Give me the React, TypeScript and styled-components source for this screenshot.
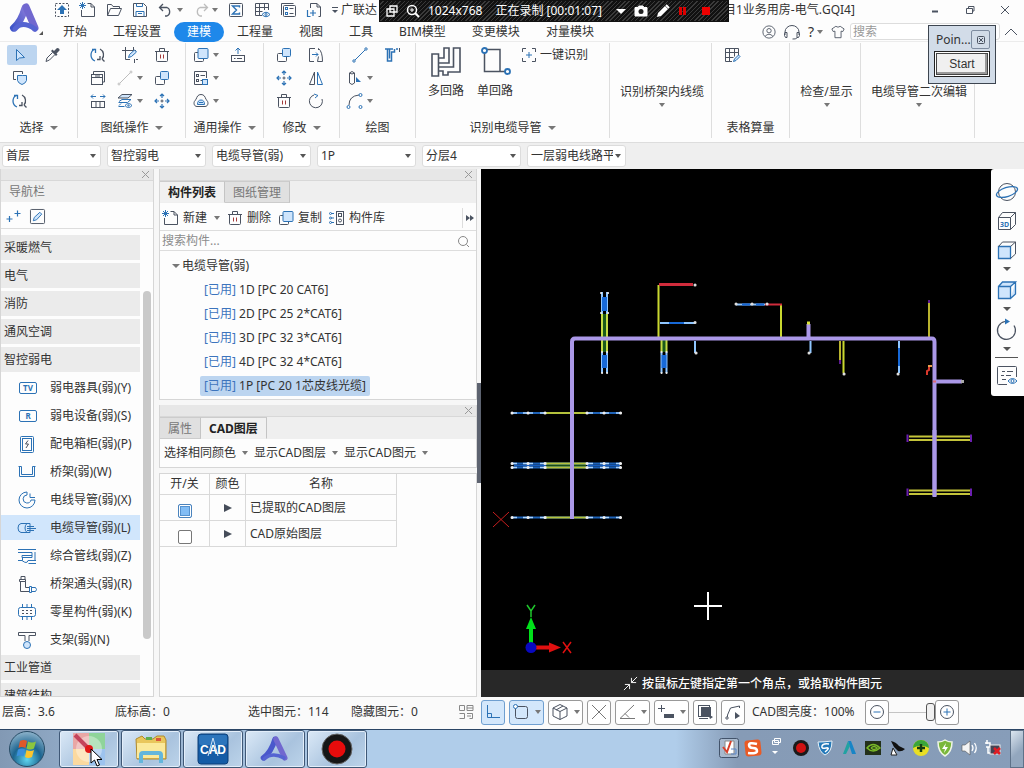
import React from "react";
import styled, { createGlobalStyle, css } from "styled-components";

const DARK = "#4b5361";
const BLUE = "#2c72b5";

const GlobalStyle = createGlobalStyle`
  * { box-sizing: border-box; }
  body {
    margin: 0;
    overflow: hidden;
    font-family: "Noto Sans", "Noto Sans CJK SC", sans-serif;
    font-size: 12px;
    line-height: 16px;
    color: #333;
    background: #fdfdfd;
  }
  button, input, select { font: inherit; color: inherit; }
  button { padding: 0; border: 0; background: none; cursor: default; }
  ul { list-style: none; margin: 0; padding: 0; }
  a { color: inherit; text-decoration: none; }
`;

/* ---------- icons ---------- */

const Glyph = styled.svg<{ $s?: number; $c?: string }>`
  display: block;
  flex: none;
  width: ${(p) => p.$s ?? 16}px;
  height: ${(p) => p.$s ?? 16}px;
  fill: none;
  stroke: ${(p) => p.$c ?? DARK};
  overflow: visible;
  .b { stroke: ${BLUE}; }
  .f { fill: #cfe5fc; }
  .w { fill: #fff; }
  .r { stroke: #a33a3a; }
  .g { stroke: #bdbdbd; }
  .sb { fill: ${BLUE}; stroke: none; }
  .sd { fill: ${DARK}; stroke: none; }
`;

const art: Record<string, React.ReactNode> = {
  upload: (<><rect x="1.5" y="1.5" width="13" height="13" strokeDasharray="2 1.5" /><path className="sb" d="M8 3l5 5h-3v4H6V8H3z" /></>),
  newFile: (<><path d="M7.500 1.500H11l3.500 3.500v9.500h-13V8M11 1.500V5h3.500" /><path className="b" d="M0 1l5 5M5 1L0 6M2.500 0v7M-1 3.500h7" /></>),
  folder: (<path d="M1.500 13.500v-11h4l1.500 2h6.500v2M1.500 13.500l3-7h11l-3 7z" />),
  save: (<><path d="M1.500 14.500v-13h10l3 3v10z" /><path className="b" d="M4.500 1.500v3h6v-3M4 14.500v-5h8v5M6 11.500h4" /></>),
  undo: (<path strokeWidth="1.300" d="M5 2L1.500 5.500 5 9M2 5.500h7a4 4.500 0 010 8.500H7" />),
  redo: (<path className="g" strokeWidth="1.300" d="M11 2l3.500 3.500L11 9M14 5.500H7a4 4.500 0 000 8.500h2" />),
  sigma: (<><rect x="1.500" y="1.500" width="13" height="13" rx="1" /><path className="b" strokeWidth="1.400" d="M11.500 5.500V4h-7l4 4-4 4h7v-1.500" /></>),
  gridEye: (<><path d="M8 13.500H1.500v-12h13V8M1.500 5.500h13M1.500 9.500h7M5.500 1.500v12M10.500 1.500V8" /><path className="b" d="M8 12.500q4-4.500 8 0q-4 4.500-8 0z" /><circle className="b" cx="12" cy="12.500" r="1" /></>),
  listDoc: (<><path d="M1.500 13V1.500h12" /><rect x="3.500" y="3.500" width="12" height="11" rx="1" /><rect className="b" x="5.500" y="5.500" width="2" height="2" /><rect className="b" x="5.500" y="10.500" width="2" height="2" /><path d="M9.500 6.500h4M9.500 11.500h4" /></>),
  docAdd: (<><path d="M4.500 6V1.500H11l3.500 3.500v9.500h-2M11 1.500V5h3.500" /><path className="b" d="M7 8v6M4 11h6M1.500 8v6.500h3" strokeWidth="1.200" /></>),
  cursor: (<path className="b f" d="M4.500 2.500v11l3-2.500 5-.5z" />),
  dropper: (<><path className="sd" d="M10 4l3-3q3 0 2.500 2.500l-3 3 1 1-1.500 1.500-5-5L8.500 2.500z" /><path d="M8.500 5.500L3 11l-1 3.500L5.500 13 11 7.500" /></>),
  shapes: (<><path d="M4 9.500H1.500v-8h9V4" /><path className="b f" d="M5.500 5.500q5 0 9 0v5q-1 3-4.500 4-3.500-1-4.500-4z" /></>),
  refreshSearch: (<><path className="b" strokeWidth="1.300" d="M5 14A6.500 6.500 0 015 2M2 2.500h3.500V6" /><path strokeWidth="1.300" d="M10 2a6.500 6.500 0 012 10M14.500 14.500L12 12M10 9v3.500h-3" /></>),
  cropPen: (<><path d="M3.500 0v12.500H8M0 3.500h14M11.500 0v4M14 12.500h2M12.500 12v4" /><path className="b f" d="M6.500 10.500l1-3 5-4.500 2 2-5 4.500z" /></>),
  trash: (<><path d="M1 4.500h14M5.500 4V1.500h5V4M2.500 4.500v9q0 1 1 1h9q1 0 1-1v-9" /><path className="r" d="M6.500 7.500v4M9.500 7.500v4" /></>),
  layersWin: (<><rect x="1.500" y="4.500" width="11" height="10" /><path d="M1.500 7.500h11M3.500 4V1.500h11v10.500H13M5 6h5" /></>),
  lineGray: (<><path className="g" d="M3 13L13 3" /><circle className="g" cx="2" cy="14" r="1" /><circle className="g" cx="14" cy="2" r="1" /></>),
  copy: (<><rect x="1.500" y="6.500" width="9" height="8" rx="1" /><rect className="b f" x="6.500" y="1.500" width="8" height="8" rx="1" /></>),
  copyBig: (<><rect x="1.500" y="5.500" width="9" height="9" rx="1" /><rect className="b f" x="5" y="1.500" width="10" height="10" rx="1" /></>),
  split: (<><path className="b" d="M6 3.500H1M3 1.500l-2 2 2 2M10 3.500h5M13 1.500l2 2-2 2" /><rect x="1.500" y="8.500" width="13" height="6" /><path d="M6 8.500v6M10 8.500v6" /></>),
  stack: (<><path className="f" d="M5 1.500h10l-4 3.500H1z" /><path className="b" d="M2 8.500l3-2h9l-3.500 3H1.500M2 12.500l2-2M1.500 13.500h6" /><path className="b" d="M8 12.500q3.500-4 7 0-3.500 4-7 0z" /><circle className="b" cx="11.500" cy="12.500" r=".7" /></>),
  move: (<><path className="b" d="M8 1v4M6 3l2-2 2 2M8 15v-4M6 13l2 2 2-2M1 8h4M3 6L1 8l2 2M15 8h-4M13 6l2 2-2 2" strokeWidth="1.200" /><path d="M6.500 8h3M8 6.500v3" /></>),
  pushUp: (<><path className="b" d="M8 7V1M5.500 3.500L8 1l2.500 2.500" /><rect x="1.500" y="8.500" width="13" height="6" /><path d="M4 11.500h1.500M7 11.500h5" /></>),
  form: (<><path d="M9 14.500H1.500v-13h12V8" /><rect x="3.500" y="4.500" width="2" height="2" /><rect x="3.500" y="9.500" width="2" height="2" /><path d="M7.500 5.500H12M7.500 10.500H9" /><rect className="b f" x="9.500" y="9.500" width="5" height="5" /></>),
  cloud: (<><path d="M8 1.500c3 0 4 2 5 5 3 2 2.500 7-1 7H4c-3.500 0-4-5-1-7 1-3 2-5 5-5z" /><path className="b f" d="M4.500 11.500q0-4.500 3.500-4.500t3.500 4.500zM6 9.500h4" /></>),
  extend: (<><path d="M6 14.500H1.500v-13H7M10.500 3V1.500q4 3 4 13H9.500l1-5" /><path className="b" d="M4 7.500h6M8 5.500l2 2-2 2" /></>),
  mirror: (<><path d="M6.500 2v12.500H1.500z" /><path className="b" d="M9.500 2v12.500h5z" /></>),
  rotate: (<><path d="M6 2A6.500 6.500 0 1014 6" /><path className="b" d="M6 1l4 1.500L7 5" /></>),
  line: (<><path className="b" d="M3 13L13 3" /><circle className="b" cx="2" cy="14" r="1.200" /><circle className="b" cx="14" cy="2" r="1.200" /></>),
  pipe: (<><path className="b" strokeWidth="1.500" d="M3.500 2v12h4V5h3V2" /><path className="b" strokeWidth="1.500" d="M5.500 2v9.500M9 2H1M12 2h2" /><path d="M15.500 1v4" /></>),
  cylinder: (<><path d="M2.500 3v10q2.500 3 5 0V3q-2.500-3-5 0q2.500 2 5 0" /><path className="sb" d="M9 7l5 5H9z" /></>),
  arc: (<><path d="M2 12Q2 3 12 2" /><circle className="b" cx="1.500" cy="14" r="1.500" /><circle className="b" cx="13.500" cy="2" r="1.500" /><circle className="b" cx="13.500" cy="14" r="1.500" /></>),
  multi: (<g strokeWidth="1.600"><path d="M1 7h6.500v22H1z" /><path d="M8 11h5V1h5v15H8" /><path d="M8 20h14.500V1H29v24H17v3h-5v-4H8" /></g>),
  single: (<><path strokeWidth="1.500" d="M4.500 6v18.500H20V2.500H7M20 24.500h5" /><circle className="b w" cx="4.500" cy="3.500" r="2.500" strokeWidth="1.800" /><circle className="b w" cx="27.500" cy="24.500" r="2.500" strokeWidth="1.800" /></>),
  scan: (<><path d="M1.500 5V1.500H5M11 1.500h3.500V5M14.500 11v3.500H11M5 14.500H1.500V11" /><path className="b" d="M8 5v6M5 8h6" /></>),
  tableEdit: (<><path d="M8 14.500H1.500v-13h13V8M1.500 5.500h13M1.500 10.500h8M5.500 1.500v13M10.500 1.500v8" /><path className="b f" d="M9.500 14.500l1-2.500 4-4 1.500 1.500-4 4z" /></>),
  user: (<><circle cx="8" cy="8" r="7" /><circle cx="8" cy="6.500" r="2.500" /><path d="M3.500 13q4.500-5 9 0" /></>),
  headset: (<path d="M1 11V8a7 6.500 0 0114 0v3M1 8.500h2v5H1.500l-1-2v-2zM15 8.500h-2v5h1.500l1-2v-2zM13.500 13.500q-2 2-5 1.500" />),
  shirt: (<path d="M5.500 1.500q2.500 2 5 0L15 4.500l-1.500 3-2-.5v7.500h-7V7l-2 .5-1.500-3z" />),
  search: (<><circle cx="7" cy="7" r="4.500" /><path d="M10.500 10.500L13 13" /></>),
  plusPlus: (<path className="b" strokeWidth="1.200" d="M3.500 8v6M.5 11h6M11.500 2.500v6M8.500 5.500h6" />),
  editBox: (<><rect x=".5" y=".5" width="15" height="15" rx="1" /><path className="b f" d="M3.500 12.500l1-3.500 6-5.500 2 2-5.500 6z" /></>),
  library: (<><path className="b" d="M5 3.500H2M5 8H2M5 12.500H2" /><circle className="b" cx="1.500" cy="3.500" r="1" /><circle className="b" cx="1.500" cy="8" r="1" /><circle className="b" cx="1.500" cy="12.500" r="1" /><rect x="7.500" y="1.500" width="7" height="13" /><rect x="9.500" y="3.500" width="3" height="3" /><circle cx="11" cy="10.500" r="1.500" /></>),
  cabinet: (<><rect className="b" x="1.500" y=".5" width="13" height="16" rx="1" /><rect className="b" x="3.500" y="2.500" width="9" height="12" /><path d="M9 4.500L6.500 8h3L7 12" /></>),
  tray: (<path className="b" d="M-.5 2.500h3v8h11v-8h3M.5 2.500v10h15v-10" />),
  conduit: (<path className="b" d="M8 3V0A8 8 0 1016 8h-4a4 4 0 11-4-5M11 1.500v4h5" />),
  cable: (<><path className="b" d="M5 3.500H2Q-1 4-1 8t3 4.500h6Q6 11 6 8t2-4.500zM8 3.500h3v9H8M8 6.500h7M8 8.500h9M8 10.500h7" /></>),
  pipes: (<path className="b" d="M-1 1.500h18M-1 4.500h14v5H3v-2h10M16 4v8M-1 12.500h4q5 4 6 0h8M3.500 10v2.500M9.500 15.500H17" />),
  joint: (<><path d="M1.500 5.500h5v6h4v4h-9zM.5 3.500h6v2h-6z" /><path d="M2 3.500v-3h4v3" /><path className="b" d="M10.500 10.500h2v6h-2zM12.500 11.500h4q2 2 0 4h-4" /></>),
  chip: (<><rect className="b" x="-.5" y="3.500" width="17" height="9" rx="2" /><path className="b" d="M3.500 0v3M8 0v3M12.500 0v3M3.500 13v3M8 13v3M12.500 13v3" /><path d="M3 6.500h2M7 6.500h2M11 6.500h2M3 9.500h2M7 9.500h2M11 9.500h2" /></>),
  bracket: (<><path d="M-.5.500h17v3H10V9M-.5.500v3H6V9" /><circle className="b f" cx="8" cy="13" r="3.500" /></>),
  angle: (<><path className="b" d="M2.500 1v12.500H15M2.500 9.500h4v4" /></>),
  boxNode: (<><rect x="2.500" y="2.500" width="12" height="12" rx="2" /><circle className="b w" cx="2.500" cy="2.500" r="2" /></>),
  cube: (<path d="M8 .5l7 3.500v8l-7 3.500L1 12V4zM1 4l7 3.500L15 4M8 7.500v8M4 6l7-4" />),
  crossX: (<path d="M1 1l14 14M15 1L1 15" stroke="#777" />),
  slope: (<path d="M1 14.500h15M1 14.500L15 1M6 9.500l4 4" stroke="#777" />),
  plusBar: (<><path d="M3.500 1v7M0 4.500h7" /><path className="sd" d="M6 10h10v4H6z" /></>),
  darkBox: (<><rect x="1.500" y="1.500" width="11" height="11" /><path className="sd" d="M4 3h10v10H4zM11 10l5 3-3 2z" /><path d="M2 14.500h9" /></>),
  polyCur: (<><path d="M2.500 14v-3l3-7 9-2v2" /><circle className="w" cx="2" cy="14" r="1.200" /><path className="sd" d="M10 8l5 4-5 3z" /></>),
  layoutGray: (<path d="M1.500 1.500h5v5h-5zM9 1.500h6v5H9zM1.500 9.500h5v5h-5M9 9.500h5.500v5h-3M9 12h4M9 4h6" stroke="#888" />),
  minus: (<><circle cx="8" cy="8" r="6.500" /><path className="b" d="M4.500 8h7" /></>),
  plus: (<><circle cx="8" cy="8" r="6.500" /><path className="b" d="M4.500 8h7M8 4.500v7" /></>),
  shrink: (<path stroke="#fff" d="M15 1L9 7M9 2v5h5M1 15l6-6M2 9h5v5" />),
  orbit: (<><circle cx="10" cy="10" r="8.500" /><ellipse className="b" cx="10" cy="10" rx="11" ry="4.500" transform="rotate(-18 10 10)" strokeWidth="1.300" /></>),
  cube3d: (<><path d="M1.500 6.500h12v12h-12zM1.500 6.500l4-5h13l-5 5M18.500 1.500v12l-5 5" /><text x="3" y="16" fill={BLUE} stroke="none" fontSize="7" fontWeight="bold">3D</text></>),
  cubeFront: (<><path className="b f" d="M1.500 6.500h12v12h-12z" strokeWidth="1.300" /><path d="M1.500 6.500l4-4.500h13l-5 4.500M18.500 2v12l-5 4.500" /></>),
  cubeBlue: (<path className="b f" strokeWidth="1.300" d="M1.500 6.500h12v12h-12zM1.500 6.500l4-4.500h13l-5 4.500M18.500 2v12l-5 4.500" />),
  spin: (<><path d="M8 1.500a9 9 0 109 4" strokeWidth="1.200" /><path className="sb" d="M8-1.500l5 3-5 3z" /></>),
  noteEye: (<><path d="M10 19.500H1.500q-1 0-1-1v-16q0-1 1-1h17q1 0 1 1V12" /><path d="M5 6.500h3M10 6.500h6M4 10.500h3M9 10.500h5M5 14.500h4" /><path className="b" d="M11 16q4.500-5 9 0-4.500 5-9 0z" /><circle className="b" cx="15.500" cy="16" r="1.500" /></>),
};

const Icon = ({ n, s = 16, v = s }: { n: string; s?: number; v?: number }) => (
  <Glyph $s={s} viewBox={`0 0 ${v} ${v}`} aria-hidden="true">{art[n]}</Glyph>
);

const CaretSvg = styled.svg<{ $big?: boolean }>`
  display: block;
  flex: none;
  width: ${(p) => (p.$big ? 8 : 6)}px;
  height: 4px;
  fill: #777;
`;
const Caret = ({ big }: { big?: boolean }) => (
  <CaretSvg $big={big} viewBox="0 0 8 4" preserveAspectRatio="none" aria-hidden="true"><path d="M0 0h8L4 4z" /></CaretSvg>
);
const Cross = () => (
  <Glyph $s={7} $c="#999" viewBox="0 0 7 7"><path d="M0 0l7 7M7 0L0 7" /></Glyph>
);

/* ---------- header ---------- */

const Page = styled.div`
  display: flex;
  flex-direction: column;
  height: 100vh;
  overflow: hidden;
`;
const Header = styled.header`
  position: relative;
  display: grid;
  grid-template-columns: 50px minmax(0, 1fr);
  grid-template-rows: 20px 21px;
  border-bottom: 1px solid #ececec;
`;
const Logo = styled.div`
  grid-row: span 2;
  padding: 2px 0 0 8px;
`;
const TitleRow = styled.div`
  display: flex;
  align-items: center;
  white-space: nowrap;
`;
const TitleStart = styled.span`
  width: 38px;
  overflow: hidden;
`;
const QuickBar = styled.div`
  display: flex;
  align-items: center;
  width: 291px;
  gap: 10px;
  padding-left: 4px;
`;
const QuickButton = styled.button`
  display: flex;
  align-items: center;
  gap: 3px;
  height: 18px;
`;
const Recorder = styled.div`
  position: relative;
  z-index: 2;
  align-self: flex-start;
  display: flex;
  align-items: center;
  flex: none;
  gap: 8px;
  width: 350px;
  height: 22px;
  padding: 0 6px;
  color: #fff;
  background: repeating-linear-gradient(135deg, #111 0 2px, #3a3a3a 2px 3px);
  border: 1px solid #111;
`;
const RecordState = styled.span`
  margin: 0 6px 0 5px;
`;
const StopMark = styled.span`
  margin-left: 5px;
`;
const TitleTail = styled.span`
  margin-left: -5px;
  flex: 1;
`;
const WindowButtons = styled.div`
  display: flex;
  gap: 21px;
  padding-right: 12px;
`;
const TabRow = styled.nav`
  display: flex;
  align-items: center;
  white-space: nowrap;
  padding-top: 2px;
`;
const Tab = styled.a<{ $on?: boolean }>`
  padding: 2px 13px;
  ${(p) => p.$on && css`
    color: #fff;
    background: #1e88ea;
    border-radius: 10px;
  `}
`;
const HeaderTools = styled.div`
  display: flex;
  align-items: center;
  gap: 8px;
  margin-left: auto;
  padding-right: 7px;
`;
const Help = styled.button`
  display: flex;
  align-items: center;
  gap: 3px;
  font-size: 14px;
`;
const HeaderSearch = styled.input`
  width: 150px;
  height: 17px;
  margin: 0 -3px;
  padding: 0 2px;
  border: 1px solid #ddd;
  border-radius: 3px;
  background: #fff;
  &::placeholder { color: #999; }
`;

/* ---------- ribbon ---------- */

const Ribbon = styled.div`
  display: flex;
  height: 101px;
  border-bottom: 1px solid #ddd;
  background: #fdfdfd;
`;
const Group = styled.section<{ $w: number }>`
  display: flex;
  flex-direction: column;
  flex: 0 0 ${(p) => p.$w}px;
  margin: 1px 0 4px;
  border-right: 1px solid #dedede;
`;
const ToolGrid = styled.div<{ $cols: number }>`
  display: grid;
  grid-template-columns: repeat(${(p) => p.$cols}, 32px);
  grid-template-rows: repeat(3, 23px);
  padding-left: 4px;
  flex: 1;
`;
const Tool = styled.button<{ $on?: boolean }>`
  display: flex;
  align-items: center;
  justify-content: center;
  gap: 4px;
  height: 20px;
  align-self: center;
  ${(p) => p.$on && css`
    width: 30px;
    margin-left: 3px;
    padding-right: 4px;
    background: #bcd5f0;
    border-radius: 2px;
  `}
`;
const GroupLabel = styled.div`
  display: flex;
  align-items: center;
  justify-content: center;
  gap: 6px;
  height: 20px;
  white-space: nowrap;
`;
const BigTools = styled.div`
  display: flex;
  flex: 1;
  gap: 13px;
  padding: 4px 0 0 12px;
`;
const BigTool = styled.button`
  display: flex;
  flex-direction: column;
  align-items: center;
  align-self: flex-start;
  gap: 6px;
`;
const LineTool = styled.button`
  display: flex;
  align-items: center;
  align-self: flex-start;
  margin-left: -5px;
  gap: 3px;
`;
const CenterTool = styled.button`
  display: flex;
  flex-direction: column;
  align-items: center;
  justify-content: center;
  gap: 3px;
  flex: 1;
  padding: 10px 0 0 3px;
  white-space: nowrap;
`;

/* ---------- combo bar ---------- */

const ComboBar = styled.div`
  display: flex;
  align-items: center;
  gap: 6px;
  height: 26px;
  padding-left: 2px;
  background: #efefef;
`;
const ComboBox = styled.label`
  position: relative;
  display: flex;
  align-items: center;
  width: 99px;
  svg { position: absolute; right: 5px; fill: #555; }
`;
const Select = styled.select`
  appearance: none;
  width: 100%;
  height: 22px;
  padding: 0 12px 0 3px;
  border: 1px solid #dcdcdc;
  border-radius: 3px;
  background: #fff;
  text-overflow: clip;
`;

/* ---------- panels ---------- */

const Main = styled.main`
  display: flex;
  flex: 1;
  min-height: 0;
  background: #f7f7f7;
`;
const Column = styled.div<{ $w: number }>`
  display: flex;
  flex-direction: column;
  flex: 0 0 ${(p) => p.$w}px;
  min-height: 0;
`;
const Gutter = styled.div`
  flex: 0 0 5px;
`;
const Panel = styled.section<{ $grow?: boolean }>`
  display: flex;
  flex-direction: column;
  flex: ${(p) => (p.$grow ? "1" : "none")};
  min-height: 0;
  border: 1px solid #d6d6d6;
  border-top: 0;
  background: #fdfdfd;
`;
const Strip = styled.div`
  display: flex;
  align-items: center;
  justify-content: flex-end;
  height: 12px;
  padding-right: 4px;
  background: #e7e7e7;
  border-bottom: 1px solid #d8d8d8;
`;
const NavTitle = styled.h2`
  margin: 0;
  height: 21px;
  padding: 3px 8px;
  font-size: 12px;
  font-weight: normal;
  color: #777;
  background: #efefef;
`;
const ToolBar = styled.div`
  display: flex;
  align-items: center;
  gap: 8px;
  height: 27px;
  padding: 2px 0 0 5px;
  border-bottom: 1px solid #ddd;
  background: #fdfdfd;
`;
const NavBody = styled.div`
  display: flex;
  flex: 1;
  min-height: 0;
  padding-top: 6px;
`;
const NavList = styled.ul`
  display: flex;
  flex-direction: column;
  gap: 3px;
  flex: 1;
  overflow: hidden;
`;
const NavHeading = styled.li`
  flex: none;
  height: 25px;
  padding: 5px 3px;
  background: #ebebeb;
`;
const NavItem = styled.li<{ $on?: boolean }>`
  display: flex;
  align-items: center;
  gap: 14px;
  flex: none;
  height: 25px;
  padding-left: 18px;
  white-space: nowrap;
  background: ${(p) => (p.$on ? "#d1e6fc" : "none")};
`;
const LetterBadge = styled.span`
  width: 18px;
  height: 12px;
  margin-right: -1px;
  border: 1px solid ${BLUE};
  border-radius: 2px;
  color: ${BLUE};
  font-size: 8px;
  font-weight: bold;
  line-height: 10px;
  text-align: center;
`;
const NavIcon = styled.span`
  width: 17px;
`;
const NavScroll = styled.div`
  width: 13px;
  padding: 56px 2px 0 3px;
  &::before {
    content: "";
    display: block;
    height: calc(100% - 57px);
    border-radius: 4px;
    background: #c9c9c9;
  }
`;
const PanelTabs = styled.div`
  display: flex;
  height: 22px;
  background: #efefef;
`;
const PanelTab = styled.button<{ $on?: boolean }>`
  padding: 2px 8px 0;
  border-right: 1px solid #c4c4c4;
  border-top: 1px solid #ccc;
  border-bottom: 1px solid ${(p) => (p.$on ? "#efefef" : "#ccc")};
  background: ${(p) => (p.$on ? "#f1f1f1" : "#e0e0e0")};
  color: ${(p) => (p.$on ? "#222" : "#777")};
  font-weight: ${(p) => (p.$on ? "bold" : "normal")};
`;
const ComponentBar = styled.div`
  display: flex;
  align-items: center;
  gap: 7px;
  height: 28px;
  padding: 2px 0 0 3px;
  border-bottom: 1px solid #ddd;
`;
const FilterBar = styled.div`
  display: flex;
  align-items: center;
  gap: 6px;
  height: 28px;
  padding-left: 4px;
`;
const BarButton = styled.button`
  display: flex;
  align-items: center;
  gap: 4px;
  white-space: nowrap;
`;
const MoreButton = styled.button`
  display: flex;
  align-items: center;
  margin-left: auto;
  width: 14px;
  height: 20px;
  padding: 0 3px;
  border-left: 1px solid #ddd;
`;
const SearchLine = styled.div`
  display: flex;
  align-items: center;
  height: 20px;
  padding-right: 6px;
  border-bottom: 1px solid #ddd;
  svg { stroke: #888; }
`;
const SearchInput = styled.input`
  flex: 1;
  padding: 0 2px;
  border: 0;
  background: none;
  outline: 0;
  &::placeholder { color: #8c8c8c; }
`;
const Tree = styled.ul`
  padding: 3px 0 1px;
`;
const TreeRoot = styled.li`
  display: flex;
  align-items: center;
  gap: 2px;
  height: 24px;
  padding-left: 12px;
`;
const TreeItem = styled.li`
  display: flex;
  align-items: center;
  height: 24px;
  padding-left: 40px;
`;
const TreeLabel = styled.span<{ $on?: boolean }>`
  padding: 2px 4px;
  white-space: pre;
  border-radius: 2px;
  background: ${(p) => (p.$on ? "#bcd5f0" : "none")};
  em { font-style: normal; color: #3c74bd; }
`;
const Space = styled.div`
  flex: none;
  height: 5px;
`;
const TablePanel = styled(Panel)`
  border-top: 1px solid #d6d6d6;
  overflow: hidden;
`;
const LayerTable = styled.table`
  border-collapse: collapse;
  width: 238px;
  table-layout: fixed;
  margin: -1px 0 0 -1px;
  th { height: 21px; padding: 0; font-weight: normal; border: 1px solid #d9d9d9; }
  td { height: 26px; padding: 0; border: 1px solid #d9d9d9; text-align: center; }
  td:last-child { text-align: left; padding-left: 4px; }
  th:nth-child(1) { width: 50px; }
  th:nth-child(2) { width: 36px; }
`;
const CheckBox = styled.input`
  appearance: none;
  display: block;
  width: 14px;
  height: 14px;
  margin: 6px auto 0;
  border: 1px solid #777;
  border-radius: 2px;
  background: #fff;
  &:checked {
    border-color: #4a83bd;
    background: #82bdf5;
    box-shadow: inset 0 0 0 1px #fff, inset 0 0 0 2px #5592cf;
  }
`;
const Play = styled.svg`
  display: block;
  width: 8px;
  height: 8px;
  margin: 0 auto;
  fill: #454c59;
`;
const Splitter = styled.div`
  display: flex;
  flex-direction: column;
  justify-content: center;
  flex: 0 0 4px;
  &::before {
    content: "";
    height: 100px;
    background: #5d6370;
  }
`;

/* ---------- viewport ---------- */

const Viewport = styled.section`
  position: relative;
  display: flex;
  flex-direction: column;
  flex: 1;
  min-width: 0;
  background: #000;
`;
const Drawing = styled.svg`
  flex: 1;
  min-height: 0;
  width: 100%;
  fill: none;
`;
const Prompt = styled.div`
  display: flex;
  align-items: center;
  justify-content: center;
  gap: 4px;
  height: 27px;
  color: #fff;
  font-weight: 500;
  background: #282828;
`;
const ViewTools = styled.div`
  position: absolute;
  top: 0;
  right: 0;
  display: flex;
  flex-direction: column;
  align-items: center;
  width: 33px;
  padding: 13px 2px 11px 0;
  gap: 9px;
  background: #fdfdfd;
  border-radius: 3px 0 0 3px;
`;
const ViewTool = styled.button`
  display: flex;
  flex-direction: column;
  align-items: center;
  gap: 7px;
  svg + svg { fill: #555; }
`;
const Rule = styled.hr`
  width: 23px;
  margin: -3px 0 -2px;
  border: 0;
  border-top: 1px solid #555;
`;

/* ---------- status bar and task bar ---------- */

const StatusBar = styled.footer`
  display: flex;
  align-items: center;
  gap: 4px;
  height: 32px;
  padding: 0 0 2px 2px;
  white-space: nowrap;
  background: #fafafa;
`;
const StatusText = styled.span<{ $w: number }>`
  width: ${(p) => p.$w}px;
`;
const StatusIcon = styled.span`
  margin-right: 3px;
`;
const StatusButton = styled.button<{ $on?: boolean; $wide?: boolean }>`
  display: flex;
  align-items: center;
  justify-content: center;
  gap: 6px;
  width: ${(p) => (p.$wide ? 35 : 24)}px;
  height: 25px;
  flex: none;
  border: 1px solid ${(p) => (p.$on ? "#6f9fd0" : "#999")};
  border-radius: 3px;
  background: ${(p) => (p.$on ? "#d3e7fb" : "#fff")};
`;
const SliderGroup = styled.div`
  display: flex;
  align-items: center;
`;
const Brightness = styled.label`
  padding: 0 4px 0 3px;
  width: 116px;
`;
const Slider = styled.input`
  appearance: none;
  width: 46px;
  height: 20px;
  margin: 0;
  background: linear-gradient(#c4c4c4, #c4c4c4) center / 100% 1px no-repeat;
  &::-webkit-slider-thumb {
    appearance: none;
    width: 9px;
    height: 18px;
    border: 1px solid #555;
    border-radius: 3px;
    background: #f0f0f0;
  }
`;
const TaskBar = styled.div`
  display: flex;
  align-items: stretch;
  height: 39px;
  border-top: 1px solid #2b4565;
  background: linear-gradient(90deg, #8299b4 0, #8fa8c4 60px, #b0cdea 370px, #b0cdea 66%, #869bb6 72%, #879db9 100%);
`;
const StartButton = styled.button`
  display: flex;
  align-items: center;
  width: 59px;
  padding-left: 8px;
`;
const TaskSet = styled.div`
  display: flex;
`;
const TaskButton = styled.button`
  position: relative;
  display: flex;
  align-items: center;
  justify-content: center;
  width: 60px;
  margin-right: 2px;
  border: 1px solid #3f5876;
  border-radius: 3px;
  background: linear-gradient(135deg, #dbe9f7, #a9c3de 60%, #bdd4ea);
  box-shadow: inset 0 0 0 1px #e3eefa;
`;
const MousePointer = styled.svg`
  position: absolute;
  left: 30px;
  top: 17px;
  width: 13px;
  height: 19px;
`;
const Tray = styled.div`
  display: flex;
  align-items: center;
  gap: 4px;
  margin-left: auto;
  padding: 0 7px 2px 0;
`;
const TrayIcon = styled.svg`
  display: block;
  width: 20px;
  height: 20px;
`;
const ShowDesktop = styled.button`
  width: 14px;
  border: 1px solid #5e7289;
  background: linear-gradient(135deg, #dce6f0, #93a7be 60%);
`;
const PointWindow = styled.aside`
  position: absolute;
  z-index: 3;
  top: 25px;
  right: 28px;
  width: 68px;
  height: 59px;
  padding: 4px 5px;
  border: 1px solid #3d4550;
  background: #d2dce8;
`;
const PointTitle = styled.div`
  display: flex;
  align-items: center;
  justify-content: space-between;
  padding-left: 2px;
  margin-bottom: 2px;
`;
const PointClose = styled.button`
  display: flex;
  align-items: center;
  justify-content: center;
  width: 19px;
  height: 19px;
  border: 1px solid #7e8ca0;
  border-radius: 2px;
`;
const PointStart = styled.button`
  width: 56px;
  height: 26px;
  border: 1px solid #222;
  background: #f0f0f0;
  box-shadow: inset 0 0 0 1px #fff, inset 0 0 0 2px #444, inset -4px -4px 0 #999;
  font-family: "Liberation Sans", sans-serif;
`;

/* ---------- data ---------- */

const tabs = ["开始", "工程设置", "建模", "工程量", "视图", "工具", "BIM模型", "变更模块", "对量模块"];
const combos: [string, string][] = [["楼层", "首层"], ["专业", "智控弱电"], ["构件类型", "电缆导管(弱)"], ["构件", "1P"], ["分层", "分层4"], ["图纸", "一层弱电线路平"]];

type ToolSpec = [string, boolean?] | null;
const groups: { label: string; w: number; cols: number; caret: boolean; tools: ToolSpec[] }[] = [
  { label: "选择", w: 78, cols: 2, caret: true, tools: [["cursor"], ["dropper"], ["shapes"], null, ["refreshSearch"], null] },
  { label: "图纸操作", w: 108, cols: 3, caret: true, tools: [["refreshSearch"], ["cropPen"], ["trash"], ["layersWin"], ["lineGray", true], ["copy"], ["split"], ["stack", true], ["move"]] },
  { label: "通用操作", w: 78, cols: 2, caret: true, tools: [["copyBig", true], ["pushUp"], ["form", true], null, ["cloud", true], null] },
  { label: "修改", w: 76, cols: 2, caret: true, tools: [["copy"], ["extend"], ["move"], ["mirror"], ["trash"], ["rotate"]] },
  { label: "绘图", w: 76, cols: 2, caret: false, tools: [["line"], ["pipe"], ["cylinder", true], null, ["arc", true], null] },
];

const headings = ["采暖燃气", "电气", "消防", "通风空调", "智控弱电"];
const navItems: [string, string][] = [
  ["TV", "弱电器具(弱)(Y)"], ["R", "弱电设备(弱)(S)"], ["cabinet", "配电箱柜(弱)(P)"], ["tray", "桥架(弱)(W)"],
  ["conduit", "电线导管(弱)(X)"], ["cable", "电缆导管(弱)(L)"], ["pipes", "综合管线(弱)(Z)"], ["joint", "桥架通头(弱)(R)"],
  ["chip", "零星构件(弱)(K)"], ["bracket", "支架(弱)(N)"],
];
const parts = ["1D [PC 20 CAT6]", "2D [PC 25 2*CAT6]", "3D [PC 32 3*CAT6]", "4D [PC 32 4*CAT6]", "1P [PC 20 1芯皮线光缆]"];

const RibbonGroup = ({ g }: { g: (typeof groups)[number] }) => (
  <Group $w={g.w}>
    <ToolGrid $cols={g.cols}>
      {g.tools.map((t, i) => t ? (
        <Tool key={i} $on={t[0] === "cursor"} aria-label={t[0]}><Icon n={t[0]} />{t[1] && <Caret />}</Tool>
      ) : <span key={i} />)}
    </ToolGrid>
    <GroupLabel>{g.label}{g.caret && <Caret big />}</GroupLabel>
  </Group>
);

/* horizontal run: blue ends with white joints, yellow-green middle */
const Run = ({ y }: { y: number }) => (
  <g>
    <path stroke="#1d62b8" strokeWidth="2" d={`M512 ${y}H621`} />
    <path stroke="#a9d4ff" strokeWidth="1.500" d={`M512 ${y}h5M523 ${y}h10M540 ${y}h7M588 ${y}h5M600 ${y}h9M616 ${y}h5`} />
    <path stroke="#b4c23c" strokeWidth="2" d={`M546 ${y}H586`} />
    <path stroke="#eee" strokeWidth="3" strokeLinecap="round" d={`M512 ${y}h.1M528 ${y}h.1M545 ${y}h.1M587 ${y}h.1M604 ${y}h.1M620.500 ${y}h.1`} />
  </g>
);
const Riser = ({ x, top, mid, low, end }: { x: number; top?: boolean; mid: number; low: number; end: number }) => (
  <g strokeWidth="2">
    {top && <><path stroke="#8fc6ff" d={`M${x} 292V314M${x + 5} 292V314`} /><path stroke="#1769d8" strokeWidth="5" d={`M${x + 2.5} 297V311`} /></>}
    <path stroke="#1a5a1a" strokeWidth="4" d={`M${x + 2.5} ${mid}V${low}`} />
    <path stroke="#c5dc45" d={`M${x} ${mid}V${low}M${x + 5} ${mid}V${low}`} />
    <path stroke="#8fc6ff" d={`M${x} ${low}V${end}M${x + 5} ${low}V${end}`} />
    <path stroke="#1769d8" strokeWidth="5" d={`M${x + 2.5} ${low + 3}V${end - 5}`} />
    <path stroke="#eee" strokeLinecap="round" d={`M${x} ${end}h.1M${x + 5} ${end}h.1M${x} ${low}h.1M${x + 5} ${low}h.1`} />
    {top && <path stroke="#eee" strokeLinecap="round" d={`M${x - 1} 293h.1M${x + 6} 293h.1M${x - 1} 313h.1M${x + 6} 313h.1`} />}
  </g>
);
const Pair = ({ y }: { y: number }) => (
  <g strokeWidth="2">
    <path stroke="#c4c43a" d={`M909 ${y}H970M909 ${y + 3.5}H970`} />
    <path stroke="#6b1fb0" d={`M907.500 ${y - 2}v7.500M971 ${y - 2}v7.500`} />
  </g>
);

const Plan = () => (
  <Drawing viewBox="481 169 543 501" preserveAspectRatio="xMinYMin meet" role="img" aria-label="弱电平面图">
    <Run y={413} /><path stroke="#174d17" strokeWidth="3" d="M546 465.500H586" /><path stroke="#155cc0" strokeWidth="2" d="M514 465.500H546M587 465.500H620" /><Run y={463.5} /><Run y={467.5} /><Run y={517.5} />
    <Riser x={602} top mid={314} low={352} end={373} />
    <Riser x={661.5} mid={340} low={352} end={373} />
    <g strokeWidth="2">
      <path stroke="#c9d830" d="M658.500 285V337M781 305V337M843.500 341V373" />
      <path stroke="#d02c3c" strokeWidth="3" d="M659 284.500H693" /><path stroke="#d02c3c" d="M765 304.500H782" />
      <path stroke="#8fc6ff" d="M660 323H695M695 341V353M736 304.500H765M810.500 341V353M899 341V373" />
      <path stroke="#1769d8" d="M669 323H684M742 304.500h8M756 304.500h8M899 348V366" />
      <path stroke="#b9b32e" d="M840 341V361M929 303V337" />
      <path stroke="#5e1b90" d="M840 360v4M929 300v3" />
      <path stroke="#e8a04c" d="M932 366h-4" /><path stroke="#d8382c" d="M929 367v3l-2 1v4" />
      <path stroke="#ddd" strokeWidth="3" strokeLinecap="round" d="M695 285h.1M695 322.500h.1M696 353h.1M736 304h.1M752 304h.1M767 304h.1M809 353h.1M844 374h.1M898 374h.1" />
    </g>
    <g stroke="#ab98e8" strokeWidth="4">
      <path d="M572 519V342Q572 338.500 575 338.500H932Q934.500 338.500 934.500 342V497" />
      <path d="M808.500 324V338M934 381.500H962" />
    </g>
    <path stroke="#d9e238" strokeWidth="3" d="M807 323h3" /><path stroke="#aaa" strokeWidth="3" d="M961 381.500h3" />
    <path stroke="#df6b78" strokeWidth="2" d="M933 381.500h3" />
    <Pair y={436.5} /><Pair y={490.5} />
    <path stroke="#ab98e8" strokeWidth="4" d="M934.500 430V496" />
    <path stroke="#c81e1e" d="M493 512l16 15M509 512l-16 15" />
    <path stroke="#fff" strokeWidth="2" d="M694 606h28M708 592v28" />
    <path stroke="#00e01a" strokeWidth="4" d="M531 643V628" /><path fill="#00e01a" d="M531 617l5 12h-10z" />
    <path stroke="#e01010" strokeWidth="4" d="M535 647.500h14" /><path fill="#e01010" d="M561 647.500l-12 5v-10z" />
    <circle fill="#0808c0" cx="531" cy="647.500" r="5.500" />
    <path stroke="#1fc82c" strokeWidth="1.500" d="M527 605l4 6 4-6M531 611v6" /><path stroke="#e01010" strokeWidth="1.500" d="M563 642l8 11M571 642l-8 11" />
  </Drawing>
);

export default function App() {
  return (
    <Page>
      <GlobalStyle />
      <Header>
        <Logo>
          <svg width="38" height="34" viewBox="0 0 38 34" aria-label="logo">
            <defs><linearGradient id="lg" x1="0" y1="1" x2="1" y2="0"><stop offset="0" stopColor="#3f55c8" /><stop offset="1" stopColor="#8579d8" /></linearGradient></defs>
            <path fill="none" stroke="url(#lg)" strokeWidth="7" strokeLinecap="round" strokeLinejoin="round" d="M5.500 26Q13 20 17 6" />
            <path fill="none" stroke="#7168cf" strokeWidth="7" strokeLinecap="round" d="M18 5l9 21" />
            <path fill="none" stroke="#5564d2" strokeWidth="5" strokeLinecap="round" d="M7 27Q14 18 27 27" />
            <path fill="#555" d="M35 29v4h-4z" />
          </svg>
        </Logo>
        <TitleRow>
          <QuickBar>
            {["upload", "newFile", "folder", "save"].map((n) => <QuickButton key={n} aria-label={n}><Icon n={n} /></QuickButton>)}
            <QuickButton aria-label="undo"><Icon n="undo" /><Caret /></QuickButton>
            <QuickButton aria-label="redo"><Icon n="redo" /><Caret /></QuickButton>
            {["sigma", "gridEye", "listDoc", "docAdd"].map((n) => <QuickButton key={n} aria-label={n}><Icon n={n} /></QuickButton>)}
            <QuickButton aria-label="更多"><Glyph $s={6} viewBox="0 0 6 6"><path d="M0 .5h6" /><path className="sd" d="M0 3h6L3 6z" /></Glyph></QuickButton>
          </QuickBar>
          <TitleStart>广联达</TitleStart>
          <Recorder>
            <Glyph $s={12} $c="#fff" viewBox="0 0 12 12"><path strokeWidth="1.300" d="M4 1h7v6H4zM1 4h7v7H1z" /></Glyph>
            <Glyph $s={14} $c="#fff" viewBox="0 0 14 14"><circle cx="6" cy="6" r="4.500" strokeWidth="1.500" /><path strokeWidth="2" d="M9 9l4 4" /><path d="M4 6h4M6 4v4" /></Glyph>
            <span>1024x768</span>
            <RecordState>正在录制 [00:01:07]</RecordState>
            <Glyph $s={10} viewBox="0 0 10 10"><path d="M0 3h10L5 8z" fill="#fff" stroke="none" /></Glyph>
            <Glyph $s={14} $c="#fff" viewBox="0 0 14 14"><path d="M1 3.500h3L5 2h4l1 1.500h3V12H1z" fill="#fff" /><circle cx="7" cy="7.500" r="2.500" fill="#222" stroke="none" /></Glyph>
            <Glyph $s={14} $c="#fff" viewBox="0 0 14 14"><path d="M1 13l1-4 7-7 3 3-7 7z" fill="#fff" stroke="none" /><path d="M10 1l3 3" strokeWidth="2" /></Glyph>
            <Glyph $s={10} viewBox="0 0 10 10"><path d="M1 1h3v8H1zM5 1h3v8H5z" fill="#d00" stroke="none" /></Glyph>
            <StopMark><Glyph $s={10} viewBox="0 0 10 10"><path d="M1 1h8v8H1z" fill="#e00" stroke="none" /></Glyph></StopMark>
          </Recorder>
          <TitleTail>目1业务用房-电气.GQI4]</TitleTail>
          <WindowButtons>
            <button aria-label="最小化"><Glyph $s={14} viewBox="0 0 14 14"><path d="M4 8.500h6" strokeWidth="2" /></Glyph></button>
            <button aria-label="还原"><Glyph $s={14} viewBox="0 0 14 14"><path d="M3.500 5.500h6v5h-6zM5.500 5V3.500h5.500V8H10" /></Glyph></button>
            <button aria-label="关闭"><Glyph $s={14} viewBox="0 0 14 14"><path d="M3 3l8 8M11 3l-8 8" /></Glyph></button>
          </WindowButtons>
        </TitleRow>
        <TabRow>
          {tabs.map((t) => <Tab key={t} href="#" $on={t === "建模"}>{t}</Tab>)}
          <HeaderTools>
            <Icon n="user" s={14} v={16} />
            <Icon n="headset" />
            <Help aria-label="帮助">?<Caret /></Help>
            <Icon n="shirt" s={14} v={16} />
            <HeaderSearch placeholder="搜索" aria-label="搜索" />
            <Glyph $s={12} viewBox="0 0 12 12"><path d="M0 9l6-6 6 6" /></Glyph>
          </HeaderTools>
        </TabRow>
        <PointWindow>
          <PointTitle>Poin...<PointClose aria-label="关闭"><Glyph $s={8} viewBox="0 0 8 8"><rect x=".5" y=".5" width="7" height="7" rx="1" /><path d="M2 2l4 4M6 2L2 6" /></Glyph></PointClose></PointTitle>
          <PointStart>Start</PointStart>
        </PointWindow>
      </Header>

      <Ribbon>
        {groups.map((g) => <RibbonGroup key={g.label} g={g} />)}
        <Group $w={194}>
          <BigTools>
            <BigTool><Icon n="multi" s={30} />多回路</BigTool>
            <BigTool><Icon n="single" s={30} />单回路</BigTool>
            <LineTool><Icon n="scan" />一键识别</LineTool>
          </BigTools>
          <GroupLabel>识别电缆导管<Caret big /></GroupLabel>
        </Group>
        <Group $w={102}><CenterTool>识别桥架内线缆<Caret /></CenterTool></Group>
        <Group $w={78}>
          <ToolGrid $cols={1}><Tool aria-label="表格算量"><Icon n="tableEdit" /></Tool></ToolGrid>
          <GroupLabel>表格算量</GroupLabel>
        </Group>
        <Group $w={71}><CenterTool>检查/显示<Caret /></CenterTool></Group>
        <Group $w={114}><CenterTool>电缆导管二次编辑<Caret /></CenterTool></Group>
      </Ribbon>

      <ComboBar>
        {combos.map(([label, value]) => (
          <ComboBox key={label}><Select aria-label={label} defaultValue={value}><option>{value}</option></Select><Caret /></ComboBox>
        ))}
      </ComboBar>

      <Main>
        <Column $w={154}>
          <Panel $grow>
            <Strip><Cross /></Strip>
            <NavTitle>导航栏</NavTitle>
            <ToolBar><button aria-label="添加"><Icon n="plusPlus" /></button><button aria-label="编辑"><Icon n="editBox" s={15} v={16} /></button></ToolBar>
            <NavBody>
              <NavList>
                {headings.map((h) => <NavHeading key={h}>{h}</NavHeading>)}
                {navItems.map(([icon, label]) => (
                  <NavItem key={label} $on={icon === "cable"}>
                    {icon.length < 3 ? <LetterBadge>{icon}</LetterBadge> : <NavIcon><Icon n={icon} /></NavIcon>}
                    {label}
                  </NavItem>
                ))}
                <NavHeading>工业管道</NavHeading>
                <NavHeading>建筑结构</NavHeading>
              </NavList>
              <NavScroll />
            </NavBody>
          </Panel>
        </Column>
        <Gutter />
        <Column $w={318}>
          <Panel>
            <Strip><Cross /></Strip>
            <PanelTabs><PanelTab $on>构件列表</PanelTab><PanelTab>图纸管理</PanelTab></PanelTabs>
            <ComponentBar>
              <BarButton><Icon n="newFile" />新建</BarButton><Caret />
              <BarButton><Icon n="trash" />删除</BarButton>
              <BarButton><Icon n="copyBig" />复制</BarButton>
              <BarButton><Icon n="library" />构件库</BarButton>
              <MoreButton aria-label="更多"><Glyph $s={8} viewBox="0 0 8 8"><path className="sd" d="M0 1l4 3-4 3zM4 1l4 3-4 3z" /></Glyph></MoreButton>
            </ComponentBar>
            <SearchLine><SearchInput placeholder="搜索构件..." aria-label="搜索构件" /><Icon n="search" s={14} /></SearchLine>
            <Tree>
              <TreeRoot><Caret big />电缆导管(弱)</TreeRoot>
              {parts.map((p) => <TreeItem key={p}><TreeLabel $on={p.startsWith("1P")}><em>[已用]</em> {p}</TreeLabel></TreeItem>)}
            </Tree>
          </Panel>
          <Space />
          <Panel>
            <Strip><Cross /></Strip>
            <PanelTabs><PanelTab>属性</PanelTab><PanelTab $on>CAD图层</PanelTab></PanelTabs>
            <FilterBar>
              <BarButton>选择相同颜色</BarButton><Caret />
              <BarButton>显示CAD图层</BarButton><Caret />
              <BarButton>显示CAD图元</BarButton><Caret />
            </FilterBar>
          </Panel>
          <Space />
          <TablePanel $grow>
            <LayerTable>
              <thead><tr><th>开/关</th><th>颜色</th><th>名称</th></tr></thead>
              <tbody>
                {["已提取的CAD图层", "CAD原始图层"].map((name, i) => (
                  <tr key={name}>
                    <td><CheckBox type="checkbox" defaultChecked={i === 0} aria-label={name} /></td>
                    <td><Play viewBox="0 0 8 8"><path d="M0 0l8 4-8 4z" /></Play></td>
                    <td>{name}</td>
                  </tr>
                ))}
              </tbody>
            </LayerTable>
          </TablePanel>
        </Column>
        <Splitter />
        <Viewport>
          <Plan />
          <Prompt><Icon n="shrink" s={15} v={16} />按鼠标左键指定第一个角点，或拾取构件图元</Prompt>
          <ViewTools>
            <ViewTool aria-label="动态观察"><Icon n="orbit" s={20} /></ViewTool>
            <ViewTool aria-label="三维"><Icon n="cube3d" s={20} /></ViewTool>
            <ViewTool aria-label="视图"><Icon n="cubeFront" s={20} /><Caret big /></ViewTool>
            <ViewTool aria-label="显示"><Icon n="cubeBlue" s={20} /><Caret big /></ViewTool>
            <ViewTool aria-label="旋转"><Icon n="spin" s={20} /><Caret big /></ViewTool>
            <Rule />
            <ViewTool aria-label="显示设置"><Icon n="noteEye" s={20} /></ViewTool>
          </ViewTools>
        </Viewport>
      </Main>

      <StatusBar>
        <StatusText $w={109}>层高：3.6</StatusText>
        <StatusText $w={129}>底标高：0</StatusText>
        <StatusText $w={99}>选中图元：114</StatusText>
        <StatusText $w={103}>隐藏图元：0</StatusText>
        <StatusIcon><Icon n="layoutGray" /></StatusIcon>
        <StatusButton $on aria-label="正交"><Icon n="angle" /></StatusButton>
        <StatusButton $on $wide aria-label="捕捉"><Icon n="boxNode" /><Caret /></StatusButton>
        <StatusButton $wide aria-label="三维"><Icon n="cube" /><Caret /></StatusButton>
        <StatusButton aria-label="交点"><Icon n="crossX" /></StatusButton>
        <StatusButton $wide aria-label="角度"><Icon n="slope" /><Caret /></StatusButton>
        <StatusButton $wide aria-label="偏移"><Icon n="plusBar" /><Caret /></StatusButton>
        <StatusButton aria-label="选择"><Icon n="darkBox" /></StatusButton>
        <StatusButton aria-label="折线"><Icon n="polyCur" /></StatusButton>
        <SliderGroup>
          <Brightness htmlFor="cad-brightness">CAD图亮度：100%</Brightness>
          <StatusButton aria-label="降低"><Icon n="minus" /></StatusButton>
          <Slider id="cad-brightness" type="range" defaultValue={100} />
          <StatusButton aria-label="提高"><Icon n="plus" /></StatusButton>
        </SliderGroup>
      </StatusBar>

      <TaskBar>
        <StartButton aria-label="开始">
          <svg width="38" height="38" viewBox="0 0 38 38">
            <defs><radialGradient id="orb" cx=".5" cy=".8" r=".8"><stop offset="0" stopColor="#5fd5ef" /><stop offset=".5" stopColor="#1c6590" /><stop offset="1" stopColor="#8fb4cc" /></radialGradient></defs>
            <circle cx="19" cy="19" r="17.500" fill="url(#orb)" stroke="#284c66" />
            <path fill="#e0592a" d="M12 11q4-2 7 0l-1.500 7q-4-2-7 0z" /><path fill="#8cc63e" d="M20 11.500q4 2 8 0l-2 7q-4 2-7.500 0z" />
            <path fill="#3a8fdc" d="M10 19.500q4-2 7 0l-1.500 7q-4-2-7 0z" /><path fill="#fbc52d" d="M18.500 20q4 2 7.500 0l-2 7q-4 2-7 0z" />
          </svg>
        </StartButton>
        <TaskSet>
          <TaskButton aria-label="定位">
            <svg width="32" height="32" viewBox="0 0 32 32"><path fill="#e9a7a5" d="M0 0h16v16H0z" /><path fill="#8fd49a" d="M16 0h16v16H16z" /><path fill="#fbd9a0" d="M0 16h16v16H0z" /><path fill="#9dc3ee" d="M16 16h16v16H16z" /><circle cx="16" cy="16" r="13" fill="#fff" opacity=".35" /><path stroke="#c4445c" strokeWidth="4" d="M2 2l13 13" /><circle cx="16" cy="16" r="4" fill="#e01818" /></svg>
            <MousePointer viewBox="0 0 13 19"><path fill="#fff" stroke="#000" d="M1 1v14l3.500-3 2.500 6 2.500-1L7 11.500h5z" /></MousePointer>
          </TaskButton>
          <TaskButton aria-label="资源管理器">
            <svg width="34" height="30" viewBox="0 0 34 30"><path fill="#e9c65c" stroke="#b08a2c" d="M2 5l6-3 3 3h8l4-3h7l2 4v19H3z" /><path fill="#fbe99b" d="M3 9h28v15H3z" /><path fill="#5fae4e" d="M12 3h6v3h-6z" /><path fill="#d8543c" d="M22 4h5v3h-5z" /><path fill="none" stroke="#63b6dc" strokeWidth="4" d="M7 29v-8q0-2 2-2h16q2 0 2 2v8" /></svg>
          </TaskButton>
          <TaskButton aria-label="CAD">
            <svg width="32" height="32" viewBox="0 0 32 32"><rect x="1" y="1" width="30" height="30" rx="3" fill="#145ca6" stroke="#0c3f78" /><rect x="2" y="2" width="28" height="10" rx="2" fill="#3c85cc" opacity=".6" /><path fill="none" stroke="#cfe2f5" d="M16 5l-5 18M16 5l5 18" /><text x="16" y="21" textAnchor="middle" fontSize="12" fontWeight="bold" fill="#fff" fontFamily="Liberation Sans">CAD</text></svg>
          </TaskButton>
          <TaskButton aria-label="广联达">
            <svg width="34" height="32" viewBox="0 0 38 34"><path fill="none" stroke="#4a58cc" strokeWidth="6" strokeLinecap="round" d="M6 27Q15 20 19 6" /><path fill="none" stroke="#7168cf" strokeWidth="6" strokeLinecap="round" d="M20 6l10 21" /><path fill="none" stroke="#5564d2" strokeWidth="4" strokeLinecap="round" d="M7 28Q16 20 29 27" /></svg>
          </TaskButton>
          <TaskButton aria-label="录制">
            <svg width="32" height="32" viewBox="0 0 32 32"><circle cx="16" cy="16" r="15" fill="#161616" stroke="#666" /><circle cx="16" cy="16" r="8.500" fill="#e80c0c" /></svg>
          </TaskButton>
        </TaskSet>
        <Tray>
          <TrayIcon viewBox="0 0 20 20"><rect x=".5" y=".5" width="19" height="19" rx="2" fill="#a8b9cd" stroke="#42536a" /><path fill="#fff" stroke="#888" d="M6 3h9v13H6z" /><path fill="none" stroke="#d8402a" strokeWidth="2" d="M4 9l4 5 4-11" /><path stroke="#5a86c8" d="M12 11h5v5h-5" fill="none" /></TrayIcon>
          <TrayIcon viewBox="0 0 20 20"><rect x="2" y="2" width="16" height="16" rx="3" fill="#ea5a24" transform="rotate(-6 10 10)" /><path fill="none" stroke="#fff" strokeWidth="2.500" d="M14 6q-8-2-8 1t4 3 4 3-9 2" /></TrayIcon>
          <TrayIcon viewBox="0 0 20 20"><path fill="none" stroke="#fff" d="M7.500.500h6v4h-6zM5.500 2.500h6v4h-6z" /><path fill="#fff" d="M5 13h6l-3 3z" /></TrayIcon>
          <TrayIcon viewBox="0 0 20 20"><circle cx="10" cy="10" r="8" fill="#1a1a1a" /><circle cx="10" cy="10" r="5" fill="#d01212" /></TrayIcon>
          <TrayIcon viewBox="0 0 20 20"><path fill="#2579b8" stroke="#e6f1f8" d="M3 4q7 0 14-1 0 11-7 14Q4 14 3 4z" /><path fill="none" stroke="#fff" strokeWidth="1.500" d="M14 6q-6-1-7 2t4 2-1 4" /></TrayIcon>
          <TrayIcon viewBox="0 0 20 20"><path fill="#1785c6" d="M9 3h3l5 13h-4z" /><path fill="#21a2a2" d="M9 3l2 5-4 8H4z" /></TrayIcon>
          <TrayIcon viewBox="0 0 20 20"><rect x="2" y="3" width="16" height="14" fill="#23301a" /><path fill="none" stroke="#79b928" strokeWidth="1.500" d="M4 10q6-7 13 0-7 6-13 0zM8 10q3-3 6 0-3 3-6 0" /></TrayIcon>
          <TrayIcon viewBox="0 0 20 20"><path fill="#111" d="M4 3q5 1 8 5l6 3q-3 3-7 2l-4-4z" /><path fill="#fff" stroke="#222" d="M6 10l4 7H4z" /></TrayIcon>
          <TrayIcon viewBox="0 0 20 20"><circle cx="10" cy="10" r="8" fill="#e9df25" /><path fill="#3aa53a" d="M2 10a8 8 0 0116 0q-8-5-16 0z" /><path stroke="#153c12" strokeWidth="2.500" d="M10 6v8M6 10h8" /></TrayIcon>
          <TrayIcon viewBox="0 0 20 20"><path fill="#7ab83a" stroke="#eef5e4" strokeWidth="1.500" d="M3 4q4 0 7-2 3 2 7 2 0 10-7 14Q3 14 3 4z" /><path fill="#fff" d="M11 5l-4 6h3l-1 4 4-6h-3z" /></TrayIcon>
          <TrayIcon viewBox="0 0 20 20"><path fill="#f4f4f4" stroke="#555" strokeWidth=".6" d="M3 7h3l5-4v14l-5-4H3z" /><path fill="none" stroke="#fff" strokeWidth="1.300" d="M13 7q2 3 0 6M15.500 5q3.500 5 0 10" /></TrayIcon>
          <TrayIcon viewBox="0 0 20 20"><path fill="none" stroke="#fff" strokeWidth="1.500" d="M4 2v4M2 5h5v4H3M5 9v6h4" /><rect x="7" y="7" width="10" height="9" fill="#445" stroke="#eee" /><path stroke="#e01c24" strokeWidth="2.500" d="M11 10l6 6M17 10l-6 6" /></TrayIcon>
        </Tray>
        <ShowDesktop aria-label="显示桌面" />
      </TaskBar>
    </Page>
  );
}
